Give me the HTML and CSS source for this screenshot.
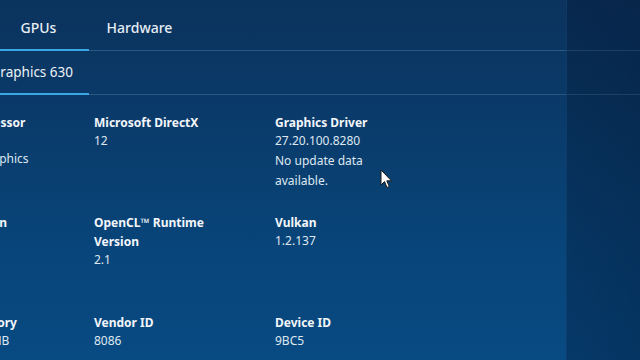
FILE: index.html
```html
<!DOCTYPE html>
<html lang="en">
<head>
<meta charset="utf-8">
<link rel="stylesheet" href="styles.css">
</head>
<body>
<div class="app">
  <nav class="tabs">
    <div class="tab active">GPUs</div>
    <div class="tab">Hardware</div>
  </nav>
  <nav class="subtabs">
    <div class="subtab active">Intel® UHD Graphics 630</div>
  </nav>
  <section class="grid">
    <div class="cell">
      <div class="label">Processor</div>
      <div class="value narrow">HD Graphics</div>
    </div>
    <div class="cell">
      <div class="label">Microsoft DirectX</div>
      <div class="value">12</div>
    </div>
    <div class="cell">
      <div class="label">Graphics Driver</div>
      <div class="value">27.20.100.8280</div>
      <div class="status">No update data available.</div>
    </div>
    <div class="cell">
      <div class="label">Screen</div>
    </div>
    <div class="cell">
      <div class="label">OpenCL™ Runtime<br>Version</div>
      <div class="value">2.1</div>
    </div>
    <div class="cell">
      <div class="label">Vulkan</div>
      <div class="value">1.2.137</div>
    </div>
    <div class="cell">
      <div class="label">Memory</div>
      <div class="value">512 MB</div>
    </div>
    <div class="cell">
      <div class="label">Vendor ID</div>
      <div class="value">8086</div>
    </div>
    <div class="cell">
      <div class="label">Device ID</div>
      <div class="value">9BC5</div>
    </div>
  </section>
  <div class="shade"></div>
  <svg class="cursor" width="13" height="20" viewBox="0 0 13 20">
    <path d="M1 1 L1 16 L4.5 12.5 L7 18.5 L9.3 17.5 L6.8 11.8 L11.5 11.8 Z" fill="#ffffff" stroke="#1a1a1a" stroke-width="1" stroke-linejoin="round"/>
  </svg>
</div>
</body>
</html>
```

FILE: styles.css
```css
* { box-sizing: border-box; }
html, body {
  margin: 0;
  padding: 0;
  width: 640px;
  height: 360px;
  overflow: hidden;
  background: #0b335d;
}
.app {
  position: relative;
  width: 640px;
  height: 360px;
  overflow: hidden;
  font-family: "Noto Sans", "Open Sans", sans-serif;
  color: #eef3f8;
  background: linear-gradient(180deg, #0b335d 0%, #0a3a69 30%, #08457a 70%, #084a82 100%);
}
.tabs {
  display: flex;
  height: 51px;
  margin-left: -12px;
  border-bottom: 1px solid #2a5883;
}
.tab {
  width: 101px;
  height: 51px;
  margin-bottom: -1px;
  display: flex;
  align-items: center;
  justify-content: center;
  padding-top: 6px;
  font-size: 14px;
  font-weight: 500;
  color: #e6edf4;
  border-bottom: 2px solid transparent;
}
.tab.active {
  border-bottom-color: #3aa7e4;
}
.subtabs {
  display: flex;
  height: 44px;
  border-bottom: 1px solid #2a5883;
}
.subtab {
  flex: 0 0 260px;
  height: 44px;
  margin-bottom: -1px;
  margin-left: -171px;
  display: flex;
  align-items: center;
  justify-content: flex-end;
  padding: 0 16px 0 0;
  font-size: 13.5px;
  white-space: nowrap;
  color: #eef3f8;
  border-bottom: 2px solid transparent;
}
.subtab.active {
  border-bottom-color: #3aa7e4;
}
.grid {
  display: grid;
  grid-template-columns: 127px 181px 181px;
  grid-auto-rows: 100px;
  margin-left: -33px;
  padding-top: 18px;
}
.cell {
  display: flex;
  flex-direction: column;
}
.label {
  font-size: 12px;
  font-weight: 700;
  line-height: 19px;
  color: #f3f6fa;
}
.value {
  font-size: 12px;
  line-height: 18px;
  color: #dfe8f1;
}
.value.narrow {
  width: 70px;
  padding-left: 12px;
}
.status {
  font-size: 12px;
  line-height: 20px;
  margin-top: 1px;
  width: 100px;
  color: #dfe8f1;
}
.shade {
  position: absolute;
  top: 0;
  right: 0;
  width: 74px;
  height: 360px;
  background: linear-gradient(90deg, rgba(0, 12, 35, 0.28) 0%, rgba(0, 12, 35, 0.34) 100%);
  border-left: 1px solid rgba(20, 70, 120, 0.6);
}
.cursor {
  position: absolute;
  left: 380px;
  top: 169px;
}
```
